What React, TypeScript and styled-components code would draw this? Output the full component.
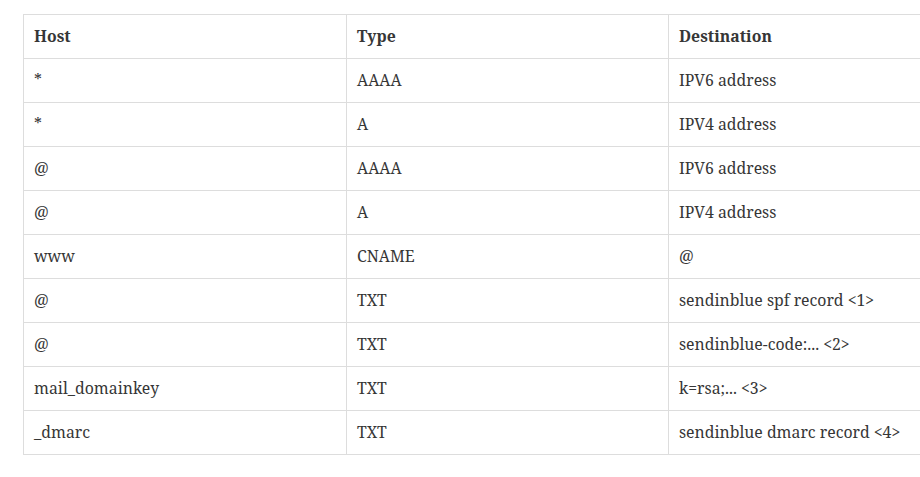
import styled, { createGlobalStyle } from 'styled-components'

const GlobalStyle = createGlobalStyle`
  html, body {
    margin: 0;
    padding: 0;
    background: #fff;
    overflow: hidden;
  }
`

const Page = styled.div`
  padding: 14px 0 0 23px;
  width: 920px;
  height: 477px;
  box-sizing: border-box;
  overflow: hidden;
  font-family: 'Noto Serif', 'DejaVu Serif Condensed', 'Liberation Serif', serif;
  color: #363636;
`

const Table = styled.table`
  border-collapse: collapse;
  table-layout: fixed;
  width: 968px;
  font-size: 15.8px;
`

const Col = styled.col<{ $w: number }>`
  width: ${(p) => p.$w}px;
`

const Cell = styled.td<{ $head?: boolean }>`
  border: 1px solid #dddddd;
  padding: 0 10px 2px;
  height: 41px;
  line-height: 24px;
  vertical-align: middle;
  font-weight: ${(p) => (p.$head ? 700 : 400)};
  text-align: left;
  white-space: nowrap;
`

const records = [
  ['*', 'AAAA', 'IPV6 address'],
  ['*', 'A', 'IPV4 address'],
  ['@', 'AAAA', 'IPV6 address'],
  ['@', 'A', 'IPV4 address'],
  ['www', 'CNAME', '@'],
  ['@', 'TXT', 'sendinblue spf record <1>'],
  ['@', 'TXT', 'sendinblue-code:... <2>'],
  ['mail_domainkey', 'TXT', 'k=rsa;... <3>'],
  ['_dmarc', 'TXT', 'sendinblue dmarc record <4>'],
]

export default function App() {
  return (
    <Page>
      <GlobalStyle />
      <Table>
        <colgroup>
          <Col $w={323} />
          <Col $w={322} />
          <Col $w={323} />
        </colgroup>
        <thead>
          <tr>
            <Cell as='th' $head>Host</Cell>
            <Cell as='th' $head>Type</Cell>
            <Cell as='th' $head>Destination</Cell>
          </tr>
        </thead>
        <tbody>
          {records.map((r, i) => (
            <tr key={i}>
              {r.map((c, j) => (
                <Cell key={j}>{c}</Cell>
              ))}
            </tr>
          ))}
        </tbody>
      </Table>
    </Page>
  )
}
